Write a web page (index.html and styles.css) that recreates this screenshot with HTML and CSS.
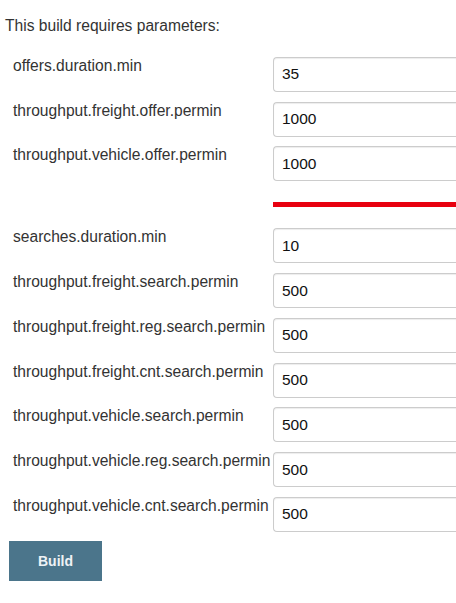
FILE: index.html
```html
<!DOCTYPE html>
<html lang="en">
<head>
<meta charset="utf-8">
<title>Build parameters</title>
<link rel="stylesheet" href="styles.css">
</head>
<body>
<form class="params">
  <p class="intro">This build requires parameters:</p>
  <div class="grid">
    <label class="name" for="p1">offers.duration.min</label>
    <input class="value" id="p1" type="text" value="35">
    <label class="name" for="p2">throughput.freight.offer.permin</label>
    <input class="value" id="p2" type="text" value="1000">
    <label class="name" for="p3">throughput.vehicle.offer.permin</label>
    <input class="value" id="p3" type="text" value="1000">

    <div class="sep-spacer"></div>
    <div class="sep"><div class="sep-line"></div></div>

    <label class="name" for="p4">searches.duration.min</label>
    <input class="value" id="p4" type="text" value="10">
    <label class="name" for="p5">throughput.freight.search.permin</label>
    <input class="value" id="p5" type="text" value="500">
    <label class="name" for="p6">throughput.freight.reg.search.permin</label>
    <input class="value" id="p6" type="text" value="500">
    <label class="name" for="p7">throughput.freight.cnt.search.permin</label>
    <input class="value" id="p7" type="text" value="500">
    <label class="name" for="p8">throughput.vehicle.search.permin</label>
    <input class="value" id="p8" type="text" value="500">
    <label class="name" for="p9">throughput.vehicle.reg.search.permin</label>
    <input class="value" id="p9" type="text" value="500">
    <label class="name" for="p10">throughput.vehicle.cnt.search.permin</label>
    <input class="value" id="p10" type="text" value="500">
  </div>
  <div class="actions">
    <button class="build" type="button">Build</button>
  </div>
</form>
</body>
</html>
```
FILE: styles.css
```css
html, body {
  margin: 0;
  padding: 0;
  overflow: hidden;
  background: #ffffff;
}

body {
  font-family: "Liberation Sans", Arial, sans-serif;
  font-size: 15.6px;
  color: #333333;
}

.params {
  margin: 0;
}

.intro {
  margin: 0;
  padding: 16.7px 0 0 5px;
  line-height: 17.8px;
  height: 17.8px;
}

.grid {
  display: grid;
  grid-template-columns: 260px 183px;
  row-gap: 9.75px;
  margin-top: 22.5px;
  padding-left: 13px;
}

.name {
  line-height: 17.8px;
  color: #333333;
  white-space: nowrap;
}

.value {
  box-sizing: border-box;
  height: 35px;
  width: 183px;
  margin: 0;
  padding: 0 0 0 8px;
  border: 1px solid #cccccc;
  border-right: none;
  border-radius: 4px 0 0 4px;
  box-shadow: inset 0 1px 1px rgba(0, 0, 0, 0.075);
  font-family: "Liberation Sans", Arial, sans-serif;
  font-size: 15.5px;
  color: #111111;
  background: #ffffff;
}

.sep {
  padding: 10.75px 0 11.55px 0;
}

.sep-line {
  height: 5px;
  background: #e8000f;
}

.actions {
  padding: 9.25px 0 0 9px;
}

.build {
  width: 93px;
  height: 40px;
  border: none;
  border-radius: 0;
  background: #4b758b;
  color: #eef2f5;
  font-family: "Liberation Sans", Arial, sans-serif;
  font-size: 14px;
  font-weight: bold;
  padding: 0;
}
```
